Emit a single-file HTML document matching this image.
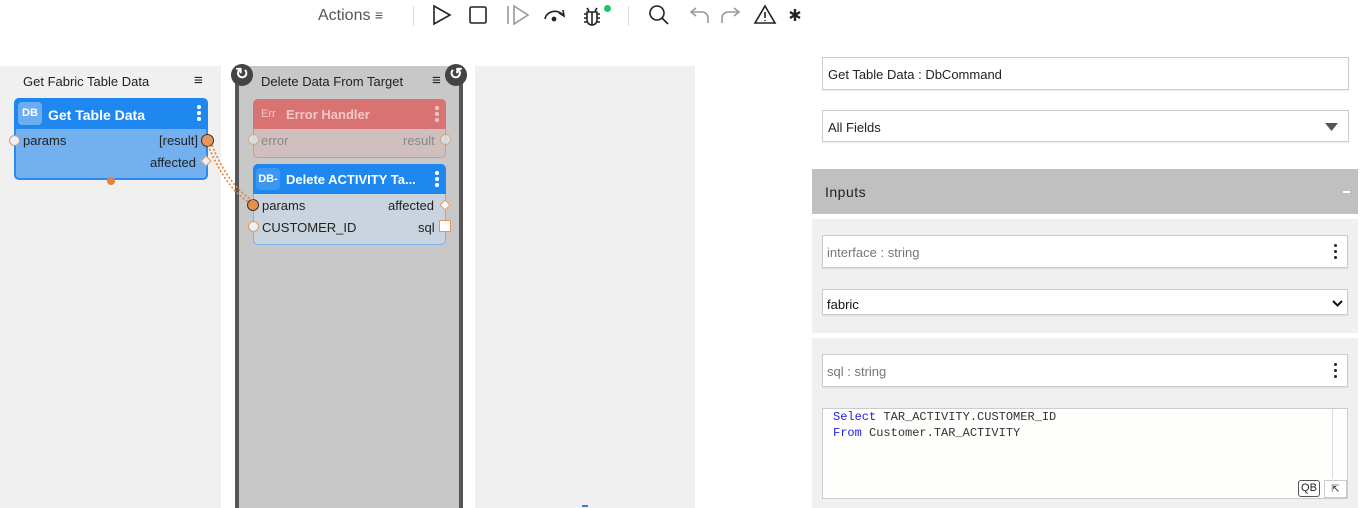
<!DOCTYPE html>
<html><head><style>
*{box-sizing:border-box}
body{margin:0;width:1368px;height:508px;overflow:hidden;background:#fff;font-family:"Liberation Sans",Arial,sans-serif;font-size:13px;color:#222;position:relative}
.a{position:absolute}
.port{position:absolute;width:11px;height:11px;border-radius:50%;background:#e8f0fa;border:1px solid #e8955a}
.dots{position:absolute;right:6px;top:6px;width:4px}
.dots i{display:block;width:3.5px;height:3.5px;border-radius:50%;background:#fff;margin-bottom:2.5px}
.fld{position:absolute;background:#fff;border:1px solid #ccc;box-shadow:0 1px 1px rgba(0,0,0,.08)}
</style></head><body>
<!-- toolbar -->
<div class="a" style="left:318px;top:7px;font-size:16px;color:#555">Actions <span style="font-size:14px">≡</span></div>
<div class="a" style="left:413px;top:6px;width:1px;height:20px;background:#ddd"></div>
<div class="a" style="left:628px;top:6px;width:1px;height:20px;background:#ddd"></div>
<svg class="a" style="left:420px;top:0" width="400" height="32" fill="none" stroke="#222" stroke-width="1.6">
<path d="M14 6 L30 15 L14 24 Z"/>
<rect x="50" y="7" width="16" height="16" rx="1.5"/>
<path d="M88 6 V24 M94 6 L108 15 L94 24 Z" stroke="#999"/>
<path d="M125 19 A10 9 0 0 1 143 15 M139 13 L144 16 L143 10"/><circle cx="134" cy="19" r="1.6" fill="#222"/>
<path d="M167 12 h10 v8 a5 5 0 0 1 -10 0 z M172 12 v13 M164 14 h3 M177 14 h3 M164 18 h3 M177 18 h3 M164 22 h3 M177 22 h3 M169 11 l-2 -3 M175 11 l2 -3"/>
<circle cx="237" cy="13" r="7"/><path d="M242 18 L248 24"/>
<path d="M272 12 h10 a6 6 0 0 1 6 6 v5 M276 8 l-5 4 5 4" stroke="#999"/>
<path d="M318 12 h-10 a6 6 0 0 0 -6 6 v5 M314 8 l5 4 -5 4" stroke="#999"/>
<path d="M345 6 L355 23 H335 Z M345 12 v6 M345 20 v1"/>
<path d="M375 9 v12 M370 12 l10 6 M380 12 l-10 6" stroke-width="2.4"/>
</svg>
<div class="a" style="left:604px;top:5px;width:7px;height:7px;border-radius:50%;background:#1cc36a"></div>

<!-- columns -->
<div class="a" style="left:0;top:66px;width:221px;height:442px;background:#f0f0f0"></div>
<div class="a" style="left:235px;top:66px;width:228px;height:442px;background:#c8c8c8;border-left:4px solid #555;border-right:4px solid #555"></div>
<div class="a" style="left:475px;top:66px;width:220px;height:442px;background:#f0f0f0"></div>
<div class="a" style="left:582px;top:505px;width:6px;height:2px;background:#2a7de1"></div>
<div class="a" style="left:23px;top:74px">Get Fabric Table Data</div>
<div class="a" style="left:194px;top:72px;font-size:15px">≡</div>
<div class="a" style="left:261px;top:74px">Delete Data From Target</div>
<div class="a" style="left:432px;top:72px;font-size:15px">≡</div>
<div class="a" style="left:231px;top:64px;width:22px;height:22px;border-radius:50%;background:#444;color:#fff;font-size:16px;text-align:center;line-height:21px;font-weight:bold">↻</div>
<div class="a" style="left:445px;top:64px;width:22px;height:22px;border-radius:50%;background:#444;color:#fff;font-size:16px;text-align:center;line-height:21px;font-weight:bold">↺</div>

<!-- node1 -->
<div class="a" style="left:14px;top:98px;width:194px;height:82px;background:#72b0ef;border:2px solid #2a8af0;border-radius:5px"></div>
<div class="a" style="left:14px;top:98px;width:194px;height:31px;background:#1e88f0;border-radius:5px 5px 0 0"></div>
<div class="a" style="left:18px;top:102px;width:24px;height:23px;background:#6aaef0;border-radius:4px;color:#fff;font-size:11px;font-weight:bold;text-align:center;line-height:23px">DB</div>
<div class="a" style="left:48px;top:107px;color:#fff;font-weight:bold;font-size:14px">Get Table Data</div>
<div class="dots" style="left:197px;top:105px"><i></i><i></i><i></i></div>
<div class="port" style="left:9px;top:135px"></div>
<div class="a" style="left:23px;top:133px">params</div>
<div class="a" style="left:159px;top:133px">[result]</div>
<div class="port" style="left:201px;top:134px;width:13px;height:13px;background:#e8955a;border-color:#333"></div>
<div class="a" style="left:150px;top:155px">affected</div>
<div class="a" style="left:202px;top:157px;width:8px;height:8px;background:#e8f0fa;border:1px solid #e8955a;transform:rotate(45deg)"></div>
<div class="a" style="left:107px;top:177px;width:8px;height:8px;border-radius:50%;background:#e8803a"></div>

<!-- error handler -->
<div class="a" style="left:253px;top:99px;width:193px;height:59px;background:#cfbfbf;border:1px solid #e09090;border-radius:5px"></div>
<div class="a" style="left:253px;top:99px;width:193px;height:30px;background:#d97272;border-radius:5px 5px 0 0"></div>
<div class="a" style="left:261px;top:108px;color:#f3c8c8;font-size:11px">Err</div>
<div class="a" style="left:286px;top:107px;color:#f3c8c8;font-weight:bold;font-size:13px">Error Handler</div>
<div class="dots" style="left:435px;top:106px;opacity:.6"><i></i><i></i><i></i></div>
<div class="port" style="left:248px;top:134px;opacity:.6"></div>
<div class="a" style="left:261px;top:133px;color:#888">error</div>
<div class="a" style="left:403px;top:133px;color:#888">result</div>
<div class="port" style="left:440px;top:134px;opacity:.6"></div>

<!-- node delete -->
<div class="a" style="left:253px;top:164px;width:193px;height:81px;background:#c9d4de;border:1px solid #7ab2ef;border-radius:5px"></div>
<div class="a" style="left:253px;top:164px;width:193px;height:30px;background:#1e88f0;border-radius:5px 5px 0 0"></div>
<div class="a" style="left:256px;top:168px;width:24px;height:22px;background:#3d97f0;border-radius:4px;color:#fff;font-size:11px;font-weight:bold;text-align:center;line-height:22px">DB-</div>
<div class="a" style="left:286px;top:172px;color:#fff;font-weight:bold;font-size:13px">Delete ACTIVITY Ta...</div>
<div class="dots" style="left:435px;top:171px"><i></i><i></i><i></i></div>
<div class="port" style="left:247px;top:199px;width:12px;height:12px;background:#e8904a;border-color:#333"></div>
<div class="a" style="left:262px;top:198px">params</div>
<div class="a" style="left:388px;top:198px">affected</div>
<div class="a" style="left:441px;top:201px;width:8px;height:8px;background:#fff;border:1px solid #e8955a;transform:rotate(45deg)"></div>
<div class="port" style="left:248px;top:221px"></div>
<div class="a" style="left:262px;top:220px">CUSTOMER_ID</div>
<div class="a" style="left:418px;top:220px">sql</div>
<div class="a" style="left:439px;top:220px;width:12px;height:12px;background:#fff;border:1px solid #e8955a"></div>
<svg class="a" style="left:0;top:0" width="300" height="260"><path d="M208 145 C220 175,235 195,252 204 M212 145 C224 175,239 193,254 201" stroke="#e8803a" stroke-width="1.6" stroke-dasharray="2 2" fill="none"/></svg>

<!-- right panel -->
<div class="fld" style="left:822px;top:57px;width:527px;height:33px;padding:9px 5px">Get Table Data : DbCommand</div>
<div class="fld" style="left:822px;top:110px;width:527px;height:32px;padding:9px 5px">All Fields</div>
<svg class="a" style="left:1325px;top:123px" width="14" height="9"><path d="M0 0h13L6.5 8z" fill="#555"/></svg>
<div class="a" style="left:812px;top:169px;width:546px;height:45px;background:#c0c0c0"></div>
<div class="a" style="left:825px;top:184px;font-size:14px;letter-spacing:.5px">Inputs</div>
<div class="a" style="left:1343px;top:191px;width:7px;height:2px;background:#fff"></div>
<div class="a" style="left:812px;top:219px;width:546px;height:114px;background:#f0f0f0"></div>
<div class="fld" style="left:822px;top:235px;width:526px;height:33px;padding:9px 4px;color:#777">interface : string</div>
<div class="a" style="left:1334px;top:244px;width:3px"><i style="display:block;width:3px;height:3px;background:#222;border-radius:50%;margin-bottom:3px"></i><i style="display:block;width:3px;height:3px;background:#222;border-radius:50%;margin-bottom:3px"></i><i style="display:block;width:3px;height:3px;background:#222;border-radius:50%"></i></div>
<div class="fld" style="left:822px;top:289px;width:526px;height:26px;padding:7px 4px;color:#111">fabric</div>
<svg class="a" style="left:1332px;top:300px" width="11" height="8"><path d="M1 1l4.5 4.5L10 1" stroke="#111" stroke-width="2" fill="none"/></svg>
<div class="a" style="left:812px;top:338px;width:546px;height:170px;background:#f0f0f0"></div>
<div class="fld" style="left:822px;top:354px;width:526px;height:33px;padding:9px 4px;color:#777">sql : string</div>
<div class="a" style="left:1334px;top:363px;width:3px"><i style="display:block;width:3px;height:3px;background:#222;border-radius:50%;margin-bottom:3px"></i><i style="display:block;width:3px;height:3px;background:#222;border-radius:50%;margin-bottom:3px"></i><i style="display:block;width:3px;height:3px;background:#222;border-radius:50%"></i></div>
<div class="a" style="left:822px;top:408px;width:526px;height:91px;background:#fefefc;border:1px solid #ccc"></div>
<div class="a" style="left:1332px;top:409px;width:1px;height:70px;background:#ddd"></div>
<div class="a" style="left:833px;top:409px;font-family:'Liberation Mono',monospace;font-size:12px;line-height:16px;color:#333;white-space:pre"><span style="color:#2020e0">Select</span> TAR_ACTIVITY.CUSTOMER_ID
<span style="color:#2020e0">From</span> Customer.TAR_ACTIVITY</div>
<div class="a" style="left:1298px;top:480px;width:22px;height:17px;border:1px solid #555;border-radius:3px;font-size:11px;text-align:center;line-height:15px;background:#fff">QB</div>
<div class="a" style="left:1324px;top:480px;width:23px;height:18px;border:1px solid #ccc;font-size:10px;text-align:center;line-height:17px;background:#fff">⇱</div>
</body></html>
